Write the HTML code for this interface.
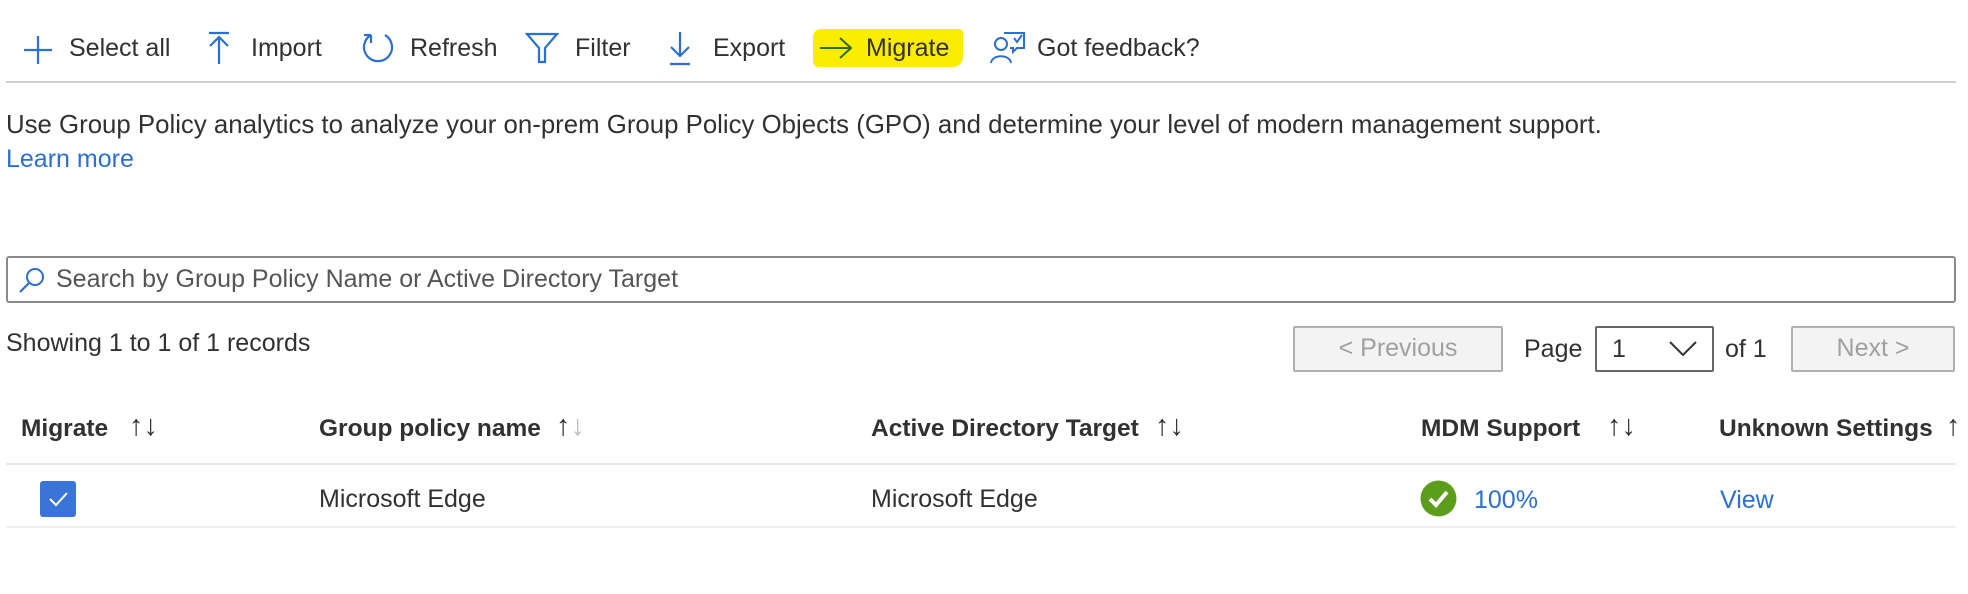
<!DOCTYPE html>
<html><head><meta charset="utf-8"><style>
*{margin:0;padding:0;box-sizing:border-box}
body{width:1968px;height:594px;background:#fff;position:relative;overflow:hidden;font-family:"Liberation Sans",sans-serif;font-size:25px;color:#323130}
.a{position:absolute;white-space:nowrap;line-height:30px;height:30px}
svg{position:absolute}
.b{font-weight:bold;color:#323130;font-size:24.5px}
.s{font-size:29px}
.blue{color:#2b6fd6}
.btn{position:absolute;background:#f3f3f3;border:2px solid #b0b0b0;border-radius:2px;color:#a0a0a0;text-align:center;line-height:41px;font-size:25px}
</style></head><body>
<svg style="left:22px;top:34px" width="32" height="32" viewBox="0 0 32 32"><path d="M16 2V30M2 16H30" stroke="#2b6fd6" stroke-width="2.2" fill="none"/></svg>
<div class="a" style="left:69px;top:33px">Select all</div>
<svg style="left:206px;top:31px" width="26" height="34" viewBox="0 0 26 34"><path d="M3 2H23M13 6V33M4 15L13 6L22 15" stroke="#2b6fd6" stroke-width="2.2" fill="none"/></svg>
<div class="a" style="left:251px;top:33px">Import</div>
<svg style="left:360px;top:31px" width="36" height="34" viewBox="0 0 36 34"><path d="M11 4A14 14 0 1 0 25 4" stroke="#2b6fd6" stroke-width="2.2" fill="none"/><path d="M11 4V12M11 4H4" stroke="#2b6fd6" stroke-width="2.2" fill="none"/></svg>
<div class="a" style="left:410px;top:33px">Refresh</div>
<svg style="left:525px;top:32px" width="34" height="32" viewBox="0 0 34 32"><path d="M2 2H32L20 16V30H14V16Z" stroke="#2b6fd6" stroke-width="2.2" fill="none"/></svg>
<div class="a" style="left:575px;top:33px">Filter</div>
<svg style="left:667px;top:30px" width="26" height="36" viewBox="0 0 26 36"><path d="M13 2V26M4 17L13 26L22 17M3 34H23" stroke="#2b6fd6" stroke-width="2.2" fill="none"/></svg>
<div class="a" style="left:713px;top:33px">Export</div>
<div style="position:absolute;left:813px;top:29px;width:150px;height:38px;background:#fcec00;border-radius:8px 4px 10px 6px"></div>
<svg style="left:819px;top:36px" width="34" height="24" viewBox="0 0 34 24"><path d="M1 12H32M21 2L32 12L21 22" stroke="#2e6b1a" stroke-width="2" fill="none"/></svg>
<div class="a" style="left:866px;top:33px">Migrate</div>
<svg style="left:990px;top:30px" width="36" height="36" viewBox="0 0 36 36"><circle cx="11" cy="14" r="6" stroke="#2b6fd6" stroke-width="2" fill="none"/><path d="M1 33C2 24 20 24 21 33M14 3H34V18H27L23 22V18H20" stroke="#2b6fd6" stroke-width="2" fill="none"/><path d="M24 8L27 12L32 5" stroke="#2b6fd6" stroke-width="2" fill="none"/></svg>
<div class="a" style="left:1037px;top:33px">Got feedback?</div>
<div style="position:absolute;left:6px;top:81px;width:1950px;height:2px;background:#d0d0d0"></div>
<div class="a" style="left:6px;top:110px;font-size:25.8px">Use Group Policy analytics to analyze your on-prem Group Policy Objects (GPO) and determine your level of modern management support.</div>
<div class="a blue" style="left:6px;top:144px">Learn more</div>
<div style="position:absolute;left:6px;top:256px;width:1950px;height:47px;border:2px solid #8a8a8a;border-radius:3px"></div>
<svg style="left:18px;top:266px" width="28" height="28" viewBox="0 0 28 28"><circle cx="17" cy="11" r="8" stroke="#2b6fd6" stroke-width="2" fill="none"/><path d="M11 17L2 26" stroke="#2b6fd6" stroke-width="2.2"/></svg>
<div class="a" style="left:56px;top:264px;color:#555">Search by Group Policy Name or Active Directory Target</div>
<div class="a" style="left:6px;top:328px">Showing 1 to 1 of 1 records</div>
<div class="btn" style="left:1293px;top:326px;width:210px;height:46px">&lt; Previous</div>
<div class="a" style="left:1524px;top:334px">Page</div>
<div style="position:absolute;left:1595px;top:326px;width:119px;height:46px;border:2px solid #666;border-radius:2px"></div>
<div class="a" style="left:1612px;top:334px">1</div>
<svg style="left:1668px;top:340px" width="30" height="18" viewBox="0 0 30 18"><path d="M2 2L15 15L28 2" stroke="#333" stroke-width="2" fill="none"/></svg>
<div class="a" style="left:1725px;top:334px">of 1</div>
<div class="btn" style="left:1791px;top:326px;width:164px;height:46px">Next &gt;</div>
<div class="a b" style="left:21px;top:414px">Migrate</div>
<div class="a s" style="left:129px;top:411px">↑↓</div>
<div class="a b" style="left:319px;top:414px">Group policy name</div>
<div class="a s" style="left:556px;top:411px">↑<span style="color:#bbb">↓</span></div>
<div class="a b" style="left:871px;top:414px">Active Directory Target</div>
<div class="a s" style="left:1155px;top:411px">↑↓</div>
<div class="a b" style="left:1421px;top:414px">MDM Support</div>
<div class="a s" style="left:1607px;top:411px">↑↓</div>
<div class="a b" style="left:1719px;top:414px">Unknown Settings</div>
<div class="a s" style="left:1946px;top:411px">↑</div>
<div style="position:absolute;left:6px;top:463px;width:1950px;height:2px;background:#e8e8e8"></div>
<div style="position:absolute;left:6px;top:526px;width:1950px;height:2px;background:#efefef"></div>
<div style="position:absolute;left:40px;top:481px;width:36px;height:36px;background:#3a74d8;border-radius:3px"></div>
<svg style="left:40px;top:481px" width="36" height="36" viewBox="0 0 36 36"><path d="M10 18L16 24L27 12" stroke="#fff" stroke-width="2" fill="none"/></svg>
<div class="a" style="left:319px;top:484px">Microsoft Edge</div>
<div class="a" style="left:871px;top:484px">Microsoft Edge</div>
<svg style="left:1420px;top:480px" width="37" height="37" viewBox="0 0 37 37"><circle cx="18.5" cy="18.5" r="18" fill="#5c9e1c"/><path d="M10 19L16 25L27 12" stroke="#fff" stroke-width="4" fill="none"/></svg>
<div class="a blue" style="left:1474px;top:485px">100%</div>
<div class="a blue" style="left:1720px;top:485px">View</div>
</body></html>
